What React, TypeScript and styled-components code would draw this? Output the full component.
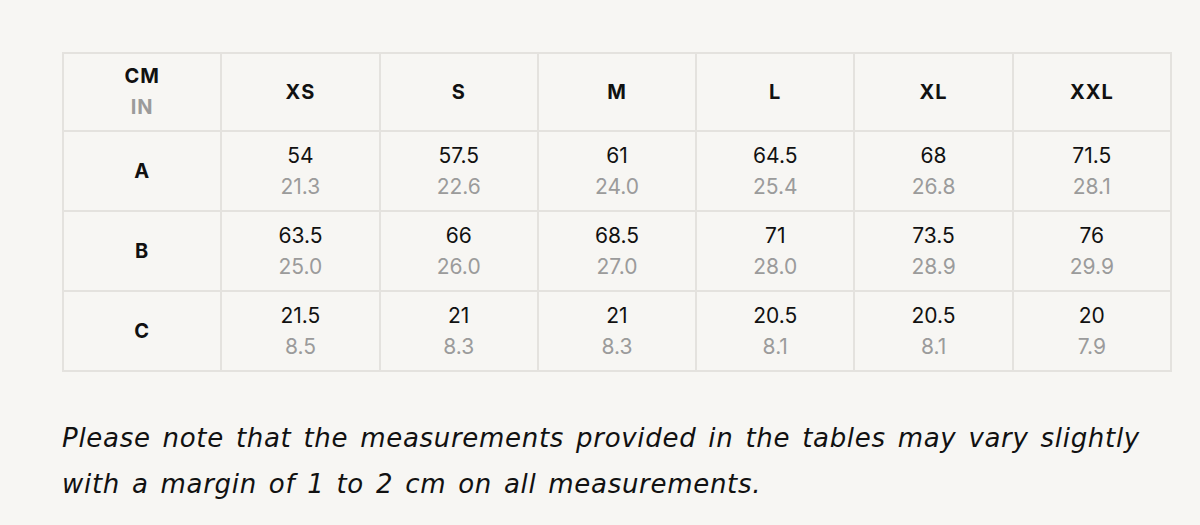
import React from "react";
import styled, { createGlobalStyle } from "styled-components";

const Global = createGlobalStyle`
  html, body { margin: 0; padding: 0; background: #f7f6f3; }
  body { font-family: "Open Sans", "Liberation Sans", sans-serif; }
`;

const Page = styled.div`
  padding: 52px 28px 0 62px;
  width: 1110px;
`;

const Table = styled.table`
  width: 1110px;
  border-collapse: collapse;
  table-layout: fixed;
  border: 2px solid #e4e2de;
`;

const Cell = styled.td<{ $head?: boolean }>`
  border: 2px solid #e4e2de;
  height: ${(p) => (p.$head ? 76 : 78)}px;
  padding: 0;
  text-align: center;
  vertical-align: middle;
  font-family: "Inter", "Open Sans", sans-serif;
`;

const Main = styled.div<{ $bold?: boolean }>`
  font-size: ${(p) => (p.$bold ? 20 : 21)}px;
  font-weight: ${(p) => (p.$bold ? 700 : 400)};
  letter-spacing: ${(p) => (p.$bold ? 1 : 0)}px;
  color: #111111;
  line-height: 31px;
`;

const Sub = styled.div<{ $bold?: boolean }>`
  font-size: ${(p) => (p.$bold ? 20 : 21)}px;
  font-weight: ${(p) => (p.$bold ? 700 : 400)};
  letter-spacing: ${(p) => (p.$bold ? 1 : 0)}px;
  color: #9b9b9b;
  line-height: 31px;
`;

const Note = styled.p`
  margin: 43px 0 0 0;
  font-family: "DejaVu Sans", sans-serif;
  font-style: italic;
  font-size: 26px;
  letter-spacing: 0.7px;
  word-spacing: 3px;
  line-height: 46px;
  color: #111111;
  width: 1110px;
`;

const sizes = ["XS", "S", "M", "L", "XL", "XXL"];
const rows: { label: string; cm: string[]; inch: string[] }[] = [
  { label: "A", cm: ["54", "57.5", "61", "64.5", "68", "71.5"], inch: ["21.3", "22.6", "24.0", "25.4", "26.8", "28.1"] },
  { label: "B", cm: ["63.5", "66", "68.5", "71", "73.5", "76"], inch: ["25.0", "26.0", "27.0", "28.0", "28.9", "29.9"] },
  { label: "C", cm: ["21.5", "21", "21", "20.5", "20.5", "20"], inch: ["8.5", "8.3", "8.3", "8.1", "8.1", "7.9"] },
];

export default function App() {
  return (
    <>
      <Global />
      <Page>
        <Table>
          <tbody>
            <tr>
              <Cell $head>
                <Main $bold>CM</Main>
                <Sub $bold>IN</Sub>
              </Cell>
              {sizes.map((s) => (
                <Cell $head key={s}>
                  <Main $bold>{s}</Main>
                </Cell>
              ))}
            </tr>
            {rows.map((r) => (
              <tr key={r.label}>
                <Cell>
                  <Main $bold>{r.label}</Main>
                </Cell>
                {r.cm.map((v, i) => (
                  <Cell key={i}>
                    <Main>{v}</Main>
                    <Sub>{r.inch[i]}</Sub>
                  </Cell>
                ))}
              </tr>
            ))}
          </tbody>
        </Table>
        <Note>
          Please note that the measurements provided in the tables may vary slightly with a margin of 1 to 2 cm on all
          measurements.
        </Note>
      </Page>
    </>
  );
}
